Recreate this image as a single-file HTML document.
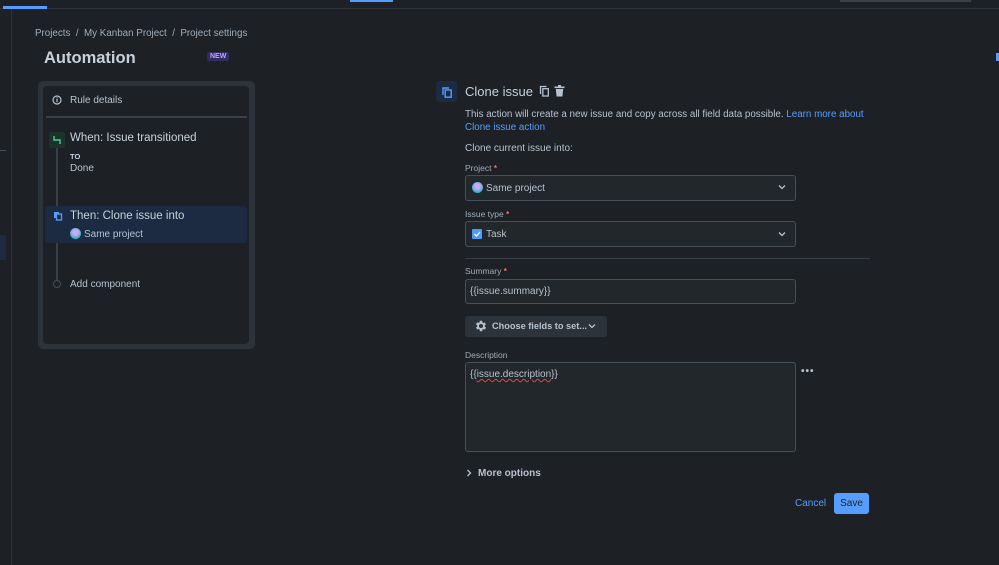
<!DOCTYPE html>
<html><head><meta charset="utf-8"><style>
*{box-sizing:border-box;margin:0;padding:0}
body{width:999px;height:565px;background:#1d2125;font-family:"Liberation Sans",sans-serif;color:#b6c2cf;position:relative;overflow:hidden;font-size:10px}
.a{position:absolute}
.lbl{font-size:8.5px;color:#9fadbc}
.lbl b{color:#f87168;font-size:8px}
.inp{position:absolute;left:465px;width:331px;background:#22272b;border:1px solid #454f59;border-radius:3px;color:#b6c2cf;font-size:10px}
</style></head><body>
<div class="a" style="left:0;top:8px;width:999px;height:1px;background:#2c333a"></div>
<div class="a" style="left:3px;top:6px;width:44px;height:3px;background:#579dff"></div>
<div class="a" style="left:350px;top:0;width:43px;height:2px;background:#579dff"></div>
<div class="a" style="left:840px;top:0;width:131px;height:2px;background:#38414a"></div>
<div class="a" style="left:11px;top:9px;width:1px;height:556px;background:#2c333a"></div>
<div class="a" style="left:0;top:150px;width:6px;height:1px;background:#454f59"></div>
<div class="a" style="left:0;top:235px;width:6px;height:25px;background:#1c2b41"></div>
<div class="a" style="left:35px;top:28px;font-size:9.8px;color:#9fadbc">Projects &nbsp;/&nbsp; My Kanban Project &nbsp;/&nbsp; Project settings</div>
<div class="a" style="left:44px;top:49px;font-size:16.5px;color:#c7d1db;font-weight:bold">Automation</div>
<div class="a" style="left:207px;top:52px;background:#352c63;color:#b8acf6;font-size:7px;font-weight:bold;padding:1px 3px;border-radius:2px">NEW</div>
<div class="a" style="left:996px;top:53px;width:3px;height:8px;background:#579dff"></div>

<div class="a" style="left:38px;top:81px;width:217px;height:268px;background:#2c333a;border-radius:5px"></div>
<div class="a" style="left:43px;top:86px;width:206px;height:258px;background:#1d2125;border-radius:4px"></div>
<svg class="a" style="left:52px;top:95px" width="10" height="10"><circle cx="5" cy="5" r="4" fill="none" stroke="#b6c2cf" stroke-width="1.2"/><rect x="4.4" y="4" width="1.2" height="3.2" fill="#b6c2cf"/><rect x="4.4" y="2.4" width="1.2" height="1" fill="#b6c2cf"/></svg>
<div class="a" style="left:70px;top:95px;font-size:10px">Rule details</div>
<div class="a" style="left:46px;top:116px;width:201px;height:2px;background:#38414a"></div>
<div class="a" style="left:56px;top:145px;width:2px;height:140px;background:#38414a"></div>
<div class="a" style="left:49px;top:132px;width:16px;height:16px;background:#1c3329;border-radius:2px"></div>
<svg class="a" style="left:51px;top:134px" width="12" height="12"><path d="M3 2v4h6v4" fill="none" stroke="#4bce97" stroke-width="1.4"/></svg>
<div class="a" style="left:70px;top:132px;font-size:11.5px;color:#c7d1db">When: Issue transitioned</div>
<div class="a" style="left:70px;top:152px;font-size:7.5px;font-weight:bold;color:#c7d1db">TO</div>
<div class="a" style="left:70px;top:163px;font-size:10px">Done</div>
<div class="a" style="left:45px;top:206px;width:202px;height:37px;background:#1c2b41;border-radius:3px"></div>
<svg class="a" style="left:53px;top:211px" width="10" height="10"><rect x="1" y="1" width="5" height="6" fill="#579dff"/><rect x="3.5" y="3" width="5" height="6" fill="#1c2b41" stroke="#579dff" stroke-width="1.3"/></svg>
<div class="a" style="left:70px;top:210px;font-size:11.5px;color:#c7d1db">Then: Clone issue into</div>
<div class="a" style="left:70px;top:228px;width:11px;height:11px;border-radius:50%;background:radial-gradient(circle at 50% 40%,#c7a8f5 30%,#2bb3c4 70%)"></div>
<div class="a" style="left:84px;top:229px;font-size:10px">Same project</div>
<div class="a" style="left:53px;top:280px;width:8px;height:8px;border:1px solid #454f59;border-radius:50%;background:#1d2125"></div>
<div class="a" style="left:70px;top:279px;font-size:10px">Add component</div>

<div class="a" style="left:436px;top:81px;width:21px;height:21px;background:#1c2b41;border-radius:3px"></div>
<svg class="a" style="left:441px;top:86px" width="12" height="12"><path d="M2 9V2h6" fill="none" stroke="#579dff" stroke-width="1.4"/><rect x="4.2" y="4" width="6" height="7.2" fill="none" stroke="#579dff" stroke-width="1.4"/></svg>
<div class="a" style="left:465px;top:84px;font-size:13px;color:#c7d1db">Clone issue</div>
<svg class="a" style="left:539px;top:85px" width="11" height="12"><path d="M1.5 9V1.5h6" fill="none" stroke="#b6c2cf" stroke-width="1.3"/><rect x="3.8" y="3.7" width="5.5" height="7.3" fill="none" stroke="#b6c2cf" stroke-width="1.3"/></svg>
<svg class="a" style="left:554px;top:85px" width="11" height="12"><rect x="0.5" y="1.5" width="10" height="1.6" fill="#b6c2cf"/><rect x="4" y="0" width="3" height="1.5" fill="#b6c2cf"/><path d="M1.8 4h7.4l-.8 7.5H2.6z" fill="#b6c2cf"/></svg>
<div class="a" style="left:465px;top:108px;width:405px;font-size:9.8px;line-height:13px">This action will create a new issue and copy across all field data possible. <span style="color:#579dff">Learn more about Clone issue action</span></div>
<div class="a" style="left:465px;top:143px">Clone current issue into:</div>
<div class="a lbl" style="left:465px;top:163px">Project <b>*</b></div>
<div class="inp" style="top:175px;height:26px"></div>
<div class="a" style="left:472px;top:182px;width:11px;height:11px;border-radius:50%;background:radial-gradient(circle at 50% 40%,#c7a8f5 30%,#2bb3c4 70%)"></div>
<div class="a" style="left:486px;top:183px">Same project</div>
<svg class="a" style="left:778px;top:184px" width="8" height="6"><path d="M1 1.5l3 3 3-3" fill="none" stroke="#b6c2cf" stroke-width="1.3"/></svg>
<div class="a lbl" style="left:465px;top:209px">Issue type <b>*</b></div>
<div class="inp" style="top:221px;height:26px"></div>
<div class="a" style="left:472px;top:229px;width:10px;height:10px;background:#4c9aff;border-radius:1px"></div>
<svg class="a" style="left:472px;top:229px" width="10" height="10"><path d="M2.5 5l2 2 3.5-4" fill="none" stroke="#fff" stroke-width="1.3"/></svg>
<div class="a" style="left:486px;top:229px">Task</div>
<svg class="a" style="left:778px;top:231px" width="8" height="6"><path d="M1 1.5l3 3 3-3" fill="none" stroke="#b6c2cf" stroke-width="1.3"/></svg>
<div class="a" style="left:465px;top:258px;width:405px;height:1px;background:#38414a"></div>
<div class="a lbl" style="left:465px;top:266px">Summary <b>*</b></div>
<div class="inp" style="top:279px;height:25px;padding:6px 4px">{{issue.summary}}</div>
<div class="a" style="left:465px;top:316px;width:142px;height:21px;background:#2c333a;border-radius:3px"></div>
<svg class="a" style="left:474px;top:319px" width="14" height="14" viewBox="0 0 24 24"><path fill="#b6c2cf" d="M19.4 13a7.5 7.5 0 000-2l2.1-1.6-2-3.5-2.5 1a7.5 7.5 0 00-1.7-1L15 3h-4l-.4 2.7a7.5 7.5 0 00-1.7 1l-2.5-1-2 3.5L6.6 11a7.5 7.5 0 000 2l-2.1 1.6 2 3.5 2.5-1a7.5 7.5 0 001.7 1L11 21h4l.4-2.7a7.5 7.5 0 001.7-1l2.5 1 2-3.5zM13 15.5a3.5 3.5 0 110-7 3.5 3.5 0 010 7z" transform="translate(-1 0)"/></svg>
<div class="a" style="left:492px;top:321px;font-weight:bold;color:#b6c2cf;font-size:9.2px">Choose fields to set...</div>
<svg class="a" style="left:588px;top:323px" width="8" height="6"><path d="M1 1.5l3 3 3-3" fill="none" stroke="#b6c2cf" stroke-width="1.3"/></svg>
<div class="a lbl" style="left:465px;top:350px">Description</div>
<div class="inp" style="top:362px;height:90px;padding:6px 4px">{{<span style="text-decoration:underline wavy #e2483d">issue.description</span>}}</div>
<div class="a" style="left:801px;top:366px;font-weight:bold;letter-spacing:1px;font-size:10px">•••</div>
<svg class="a" style="left:466px;top:469px" width="6" height="8"><path d="M1.5 1l3 3-3 3" fill="none" stroke="#b6c2cf" stroke-width="1.3"/></svg>
<div class="a" style="left:478px;top:468px;font-weight:bold">More options</div>
<div class="a" style="left:795px;top:498px;color:#579dff">Cancel</div>
<div class="a" style="left:834px;top:493px;width:35px;height:21px;background:#579dff;border-radius:3px;color:#1d2125;text-align:center;line-height:21px">Save</div>
</body></html>
